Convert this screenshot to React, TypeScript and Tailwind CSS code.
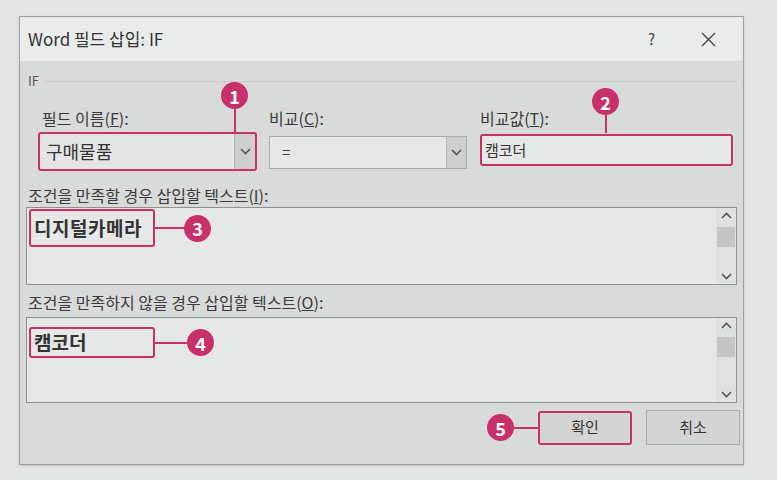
import React from "react";

const font = { fontFamily: '"Noto Sans CJK KR", "Noto Sans", sans-serif' };

function Badge({ n }: { n: number }) {
  return (
    <div className="w-[27px] h-[27px] rounded-full bg-[#c8306a] text-white flex items-center justify-center text-[18px] font-bold leading-none">
      {n}
    </div>
  );
}

function Chevron({ up }: { up?: boolean }) {
  return (
    <svg width="11" height="7" viewBox="0 0 11 7" className={up ? "rotate-180" : ""}>
      <path d="M1 1l4.5 4.5L10 1" fill="none" stroke="#555" strokeWidth="1.6" />
    </svg>
  );
}

function Scrollbar() {
  return (
    <div className="w-[20px] h-full flex flex-col items-center bg-[#e0e2e1] py-[4px]">
      <Chevron up />
      <div className="w-[18px] h-[20px] mt-[8px] bg-[#c3c5c4]" />
      <div className="flex-1" />
      <Chevron />
    </div>
  );
}

function Mn({ c }: { c: string }) {
  return (
    <span>
      (<span className="underline">{c}</span>):
    </span>
  );
}

export default function App() {
  return (
    <div className="w-[777px] h-[480px] bg-[#e4e6e5] pt-[16px] pl-[19px] overflow-hidden" style={font}>
      <div className="w-[725px] h-[449px] border border-[#9ea09f] flex flex-col bg-[#d9dbda] shadow-sm">
        {/* title bar */}
        <div className="h-[44px] bg-[#eaeceb] flex items-center pl-[8px] pr-[27px] text-[#333]">
          <span className="text-[17px]">Word 필드 삽입: IF</span>
          <div className="flex-1" />
          <span className="text-[15px] text-[#444] mr-[46px]">?</span>
          <svg width="15" height="15" viewBox="0 0 15 15">
            <path d="M1 1l13 13M14 1L1 14" stroke="#444" strokeWidth="1.4" />
          </svg>
        </div>

        {/* body */}
        <div className="flex-1 flex flex-col px-[6px] text-[#3a3a3a]">
          <div className="h-[20px] mt-[10px] flex items-center pl-[2px] gap-[6px]">
            <span className="text-[13px] text-[#555]">IF</span>
            <div className="flex-1 h-px bg-[#c9cbca]" />
          </div>

          {/* fields row */}
          <div className="flex mt-[15px] pl-[12px]">
            <div className="w-[219px] flex flex-col relative">
              <span className="text-[16px] h-[24px] pl-[4px] leading-[24px]">
                필드 이름<Mn c="F" />
              </span>
              <div className="mt-[2px] h-[39px] border-2 border-[#c8306a] rounded-[3px] bg-[#e4e6e5] flex items-center">
                <span className="flex-1 pl-[6px] text-[18px] text-[#333]">구매물품</span>
                <div className="w-[21px] h-full bg-[#cdcfce] border-l border-[#b5b7b6] flex items-center justify-center">
                  <Chevron />
                </div>
              </div>
              <div className="absolute left-[183px] top-[-24px] flex flex-col items-center">
                <Badge n={1} />
                <div className="w-[2px] h-[24px] bg-[#c8306a]" />
              </div>
            </div>

            <div className="w-[198px] ml-[12px] flex flex-col">
              <span className="text-[16px] h-[24px] leading-[24px]">
                비교<Mn c="C" />
              </span>
              <div className="mt-[6px] h-[33px] border border-[#a9abaa] bg-[#e6e8e7] flex items-center">
                <span className="flex-1 pl-[12px] text-[15px] text-[#444]">=</span>
                <div className="w-[20px] h-full bg-[#cdcfce] border-l border-[#b5b7b6] flex items-center justify-center">
                  <Chevron />
                </div>
              </div>
            </div>

            <div className="w-[253px] ml-[13px] flex flex-col relative">
              <span className="text-[16px] h-[24px] leading-[24px]">
                비교값<Mn c="T" />
              </span>
              <div className="mt-[4px] h-[32px] border-2 border-[#c8306a] rounded-[3px] bg-[#e6e8e7] flex items-center">
                <span className="pl-[3px] text-[15px] text-[#333]">캠코더</span>
              </div>
              <div className="absolute left-[112px] top-[-18px] flex flex-col items-center">
                <Badge n={2} />
                <div className="w-[2px] h-[18px] bg-[#c8306a]" />
              </div>
            </div>
          </div>

          <span className="text-[16px] mt-[12px] h-[24px] leading-[24px] pl-[2px]">
            조건을 만족할 경우 삽입할 텍스트<Mn c="I" />
          </span>
          <div className="h-[78px] border border-[#8f9190] bg-[#e6e8e7] flex">
            <div className="flex-1 pt-[1px] pl-[2px]">
              <div className="flex items-center">
                <div className="w-[126px] h-[38px] border-2 border-[#c8306a] rounded-[3px] flex items-center pl-[3px]">
                  <span className="text-[19px] font-bold text-[#333] tracking-[0.5px]">디지털카메라</span>
                </div>
                <div className="w-[29px] h-[2px] bg-[#c8306a]" />
                <Badge n={3} />
              </div>
            </div>
            <Scrollbar />
          </div>

          <span className="text-[16px] mt-[5px] h-[24px] leading-[24px] pl-[2px]">
            조건을 만족하지 않을 경우 삽입할 텍스트<Mn c="O" />
          </span>
          <div className="mt-[3px] h-[86px] border border-[#8f9190] bg-[#e6e8e7] flex">
            <div className="flex-1 pt-[9px] pl-[2px]">
              <div className="flex items-center">
                <div className="w-[126px] h-[31px] border-2 border-[#c8306a] rounded-[3px] flex items-center pl-[3px]">
                  <span className="text-[19px] font-bold text-[#333]">캠코더</span>
                </div>
                <div className="w-[32px] h-[2px] bg-[#c8306a]" />
                <Badge n={4} />
              </div>
            </div>
            <Scrollbar />
          </div>

          {/* buttons */}
          <div className="flex justify-end items-center mt-[7px] -mr-[3px]">
            <Badge n={5} />
            <div className="w-[24px] h-[2px] bg-[#c8306a]" />
            <div className="w-[94px] h-[34px] border-2 border-[#c8306a] rounded-[3px] bg-[#d3d5d4] flex items-center justify-center text-[15px] text-[#333]">
              확인
            </div>
            <div className="w-[94px] h-[35px] ml-[14px] border border-[#a9abaa] bg-[#d3d5d4] flex items-center justify-center text-[15px] text-[#333]">
              취소
            </div>
          </div>
        </div>
      </div>
    </div>
  );
}
